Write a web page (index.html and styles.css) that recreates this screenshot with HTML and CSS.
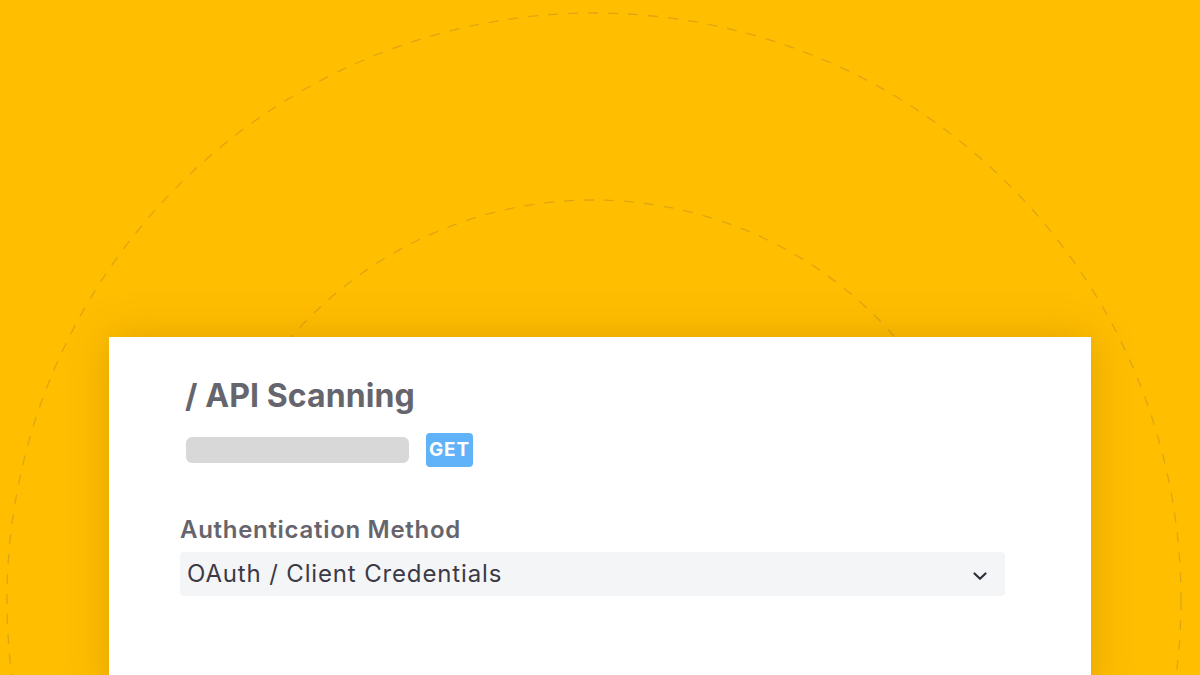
FILE: index.html
```html
<!DOCTYPE html>
<html>
<head>
<meta charset="utf-8">
<link rel="stylesheet" href="styles.css">
</head>
<body>
<div class="stage">
  <svg class="rings" width="1200" height="675" viewBox="0 0 1200 675">
    <circle cx="594" cy="600" r="587" fill="none" stroke="#dfa514" stroke-width="1.3" stroke-dasharray="10 10"/>
    <circle cx="593" cy="601" r="401" fill="none" stroke="#dfa514" stroke-width="1.3" stroke-dasharray="10 10"/>
  </svg>
  <main class="card">
    <h1 class="title">/ API Scanning</h1>
    <div class="endpoint">
      <div class="url-bar"></div>
      <span class="method">GET</span>
    </div>
    <label class="field-label">Authentication Method</label>
    <div class="select">
      <span class="select-value">OAuth / Client Credentials</span>
      <svg class="chevron" width="14" height="9" viewBox="0 0 14 9"><path d="M1.5 1.5 L7 6.8 L12.5 1.5" fill="none" stroke="#2f2f3a" stroke-width="2.2" stroke-linecap="round" stroke-linejoin="round"/></svg>
    </div>
  </main>
</div>
</body>
</html>
```
FILE: styles.css
```css
html, body {
  margin: 0;
  padding: 0;
}
body {
  background: #ffbe00;
  width: 1200px;
  height: 675px;
  overflow: hidden;
  font-family: Inter, Lato, "Noto Sans", sans-serif;
}
.stage {
  position: relative;
  width: 1200px;
  height: 675px;
  padding-top: 337px;
  box-sizing: border-box;
}
.rings {
  position: absolute;
  left: 0;
  top: 0;
}
.card {
  position: relative;
  margin-left: 109px;
  width: 982px;
  height: 360px;
  background: #ffffff;
  box-shadow: 0 0 40px rgba(150, 90, 0, 0.28);
  padding: 37px 86px 0 71px;
  box-sizing: border-box;
}
.title {
  margin: 0 0 0 5px;
  font-size: 32px;
  font-weight: 700;
  color: #66656d;
  line-height: 44px;
  letter-spacing: 0.1px;
}
.endpoint {
  display: flex;
  align-items: center;
  gap: 17px;
  margin: 15px 0 0 6px;
}
.url-bar {
  width: 223px;
  height: 26px;
  border-radius: 6px;
  background: #d8d8d8;
}
.method {
  display: inline-block;
  background: #60b3f8;
  color: #ffffff;
  font-weight: 700;
  font-size: 19px;
  line-height: 34px;
  width: 47px;
  box-sizing: border-box;
  text-align: center;
  border-radius: 4px;
  letter-spacing: 0.8px;
}
.field-label {
  display: block;
  margin-top: 47px;
  font-size: 24px;
  font-weight: 600;
  color: #66656d;
  line-height: 32px;
  letter-spacing: 0.7px;
}
.select {
  display: flex;
  align-items: center;
  justify-content: space-between;
  margin-top: 6px;
  height: 44px;
  background: #f4f5f7;
  border-radius: 4px;
  padding: 0 18px 0 7px;
}
.select-value {
  font-size: 24px;
  color: #3b3a46;
  line-height: 44px;
  letter-spacing: 0.85px;
}
.chevron {
  display: block;
  margin-top: 4px;
}
```
